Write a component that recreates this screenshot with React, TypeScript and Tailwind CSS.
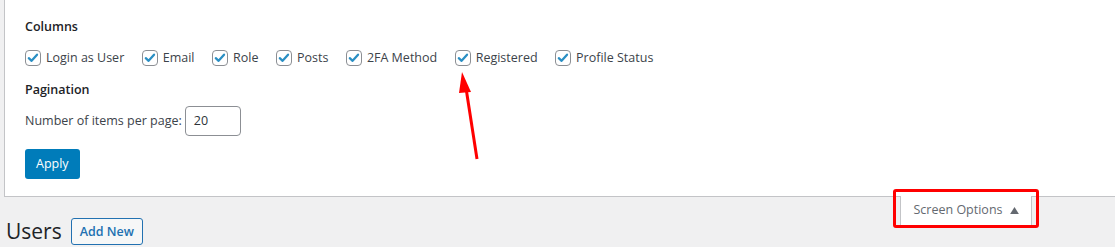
import React from 'react';

const font = { fontFamily: '"Open Sans", "Noto Sans", sans-serif' };

const columns = ['Login as User', 'Email', 'Role', 'Posts', '2FA Method', 'Registered', 'Profile Status'];

const CheckBox = () => (
  <span className="w-4 h-4 rounded-[4px] border border-[#8c8f94] bg-white flex items-center justify-center shrink-0">
    <svg viewBox="0 0 16 16" className="w-[14px] h-[14px]">
      <path d="M3.2 8.2 L6.4 11.2 L12.6 4.2" fill="none" stroke="#2a8fc4" strokeWidth="2.6" strokeLinecap="round" strokeLinejoin="round" />
    </svg>
  </span>
);

const App: React.FC = () => {
  return (
    <div className="relative w-[1115px] h-[247px] bg-[#f0f0f1] overflow-hidden text-[12.5px] text-[#3c434a]" style={font}>
      {/* screen options panel */}
      <div className="ml-[4px] h-[197px] bg-white border-l border-b border-[#c3c4c7] pl-[20px] pt-[17px]">
        <h5 className="font-semibold text-[#1d2327] leading-[19px]">Columns</h5>
        <div className="flex items-center mt-[13px]">
          {columns.map((c) => (
            <label key={c} className="flex items-center gap-[5px] mr-[17.5px] leading-[18px]">
              <CheckBox />
              <span>{c}</span>
            </label>
          ))}
        </div>
        <h5 className="font-semibold text-[#1d2327] leading-[19px] mt-[13px]">Pagination</h5>
        <div className="flex items-center mt-[7px]">
          <span>Number of items per page:</span>
          <div className="ml-[3px] w-[56px] h-[30px] border border-[#8c8f94] rounded-[4px] pl-[8px] flex items-center text-[#2c3338]">20</div>
        </div>
        <button className="mt-[13px] h-[30px] px-[11px] rounded-[3px] bg-[#007cba] text-white text-[12.5px] leading-[28px]">Apply</button>
      </div>

      {/* bottom row */}
      <div className="flex items-start">
        <div className="flex items-center pl-[6px] pt-[20px]">
          <h1 className="text-[21px] leading-[28px] text-[#1d2327] font-normal">Users</h1>
          <span className="ml-[9px] h-[27px] px-[8px] border border-[#2271b1] rounded-[3px] bg-[#f6f7f7] text-[#2271b1] font-semibold text-[12.5px] leading-[25px]">Add New</span>
        </div>
        <div className="ml-auto mr-[83px] -mt-px">
          <div className="w-[132px] h-[30px] bg-white border-l border-r border-b border-[#c3c4c7] flex items-center justify-center gap-[7px] text-[#646970] text-[12.5px]">
            <span>Screen Options</span>
            <svg viewBox="0 0 10 8" className="w-[9px] h-[7px]"><path d="M0 8 L5 0 L10 8 Z" fill="#646970" /></svg>
          </div>
        </div>
      </div>

      {/* red highlight box */}
      <div className="absolute left-[893px] top-[189px] w-[146px] h-[39px] border-[3px] border-[#ff0000] rounded-[3px]" />

      {/* red arrow */}
      <svg className="absolute left-0 top-0" width="1115" height="247">
        <line x1="477" y1="159" x2="466" y2="88" stroke="#ff0000" strokeWidth="3" />
        <path d="M462 72 L471 92 L459 93 Z" fill="#ff0000" />
      </svg>
    </div>
  );
};

export default App;
